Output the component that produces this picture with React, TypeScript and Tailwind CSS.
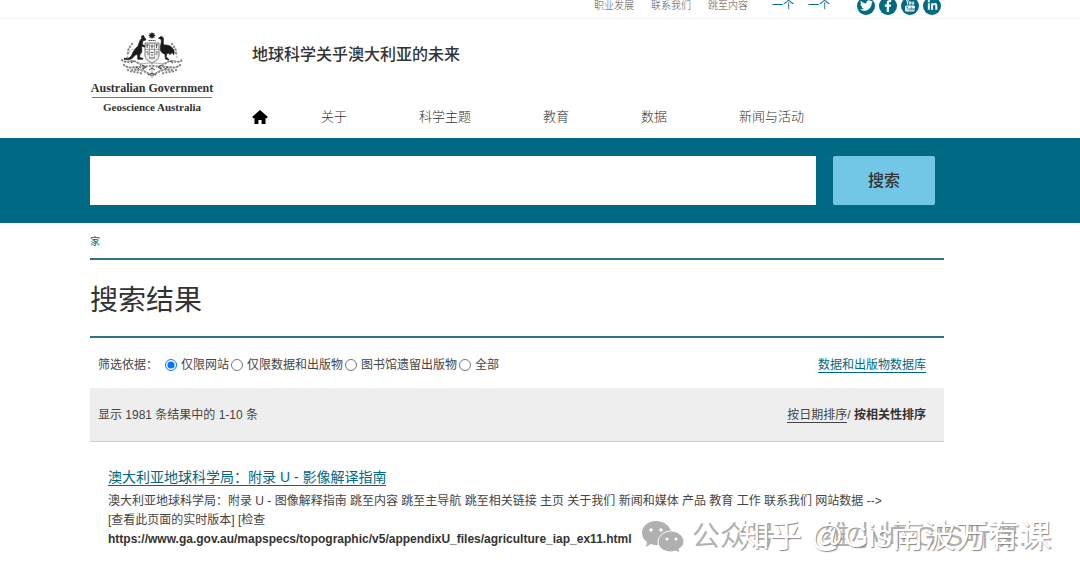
import { useState } from "react"
import { FaTwitter, FaFacebookF, FaLinkedinIn } from "react-icons/fa"

const YouTubeIcon = () => {
  return (
    <svg className="size-[14px]" viewBox="0 0 14 14" fill="none" stroke="#fff" aria-hidden="true">
      <path d="M3.500 1l1 2 1-2M4.500 3v2.500M6.200 2.800h1.600v2.400H6.200zM9.200 2.500v2.700h1.500V2.500" strokeWidth=".9" />
      <rect x="2" y="6.500" width="10" height="6" rx="1.500" fill="#fff" stroke="none" />
      <path d="M3.200 8h2M4.200 8v3.500M6 9v2.200h1.200V9M8.400 7.500v3.700h1V9.300h-1M12 11.200h-1.300V9.400h1v.9h-1" stroke="#006983" strokeWidth=".6" />
    </svg>
  )
}

const social = [
  { name: "Twitter", icon: <FaTwitter size={13} /> },
  { name: "Facebook", icon: <FaFacebookF size={12} /> },
  { name: "YouTube", icon: <YouTubeIcon /> },
  { name: "LinkedIn", icon: <FaLinkedinIn size={11} /> },
]

const menu = ["关于", "科学主题", "教育", "数据", "新闻与活动"]

const filters = ["仅限网站", "仅限数据和出版物", "图书馆遗留出版物", "全部"]

const Crest = () => {
  return (
    <svg className="h-[47px] w-[64px]" viewBox="0 0 64 47" fill="none" aria-hidden="true">
      {/* star and wreath */}
      <path d="M32 0l.9 1.500 1.800-.5-.5 1.700 1.600.8-1.600.8.5 1.700-1.800-.5L32 7l-.9-1.500-1.800.5.5-1.700-1.600-.8 1.600-.8-.5-1.700 1.800.5z" fill="#222" />
      <path d="M28.500 8.500h7" stroke="#444" strokeWidth="1.200" strokeDasharray="1.500 .5" />
      {/* shield */}
      <path d="M25 11h14v12c0 4-3 6-7 8-4-2-7-4-7-8z" fill="#eee" stroke="#666" strokeWidth=".9" />
      <path d="M25 17.500h14M29.500 11v16M34.500 11v16" stroke="#777" strokeWidth=".6" />
      <path d="M26 13h2.500M27.200 12v4M30.500 14h3M32 12.500v4M35.500 13h2.500M36.500 12v4M26.200 20h2.500M27 22h2M30.500 20.500h3M31 23h2M35.500 20h2.500M35.500 22h2M30 26h4" stroke="#555" strokeWidth=".9" />
      {/* wattle */}
      <g stroke="#888" strokeWidth=".7">
        <path d="M2 29c5 2 8-2 14 1s9 1 16 1 10 2 16-1 9 1 14-1M5 34c7 4 12-2 20 2M59 34c-7 4-12-2-20 2M14 39c6-3 12 0 18 5 6-5 12-8 18-5M32 31v15" />
        <path d="M8 22c-1-3 0-6 3-8M7 26c0-4 2-7 6-9M56 22c1-3 0-6-3-8M57 26c0-4-2-7-6-9" strokeDasharray="2 1" />
      </g>
      <g stroke="#888" strokeWidth="2.200" strokeLinecap="round" strokeDasharray=".2 3.100">
        <path d="M2 28c6 5 10-2 16 3s8 3 14 3 8 2 14-3 10 2 16-3" />
        <path d="M4 33c8 6 12-1 20 4M60 33c-8 6-12-1-20 4" />
        <path d="M12 38c6-2 13 1 20 6 7-5 14-8 20-6" />
        <path d="M8 21c0-4 2-6 4-9M56 21c0-4-2-6-4-9" />
        <path d="M8 38c4 3 10 1 14 4M56 38c-4 3-10 1-14 4" />
      </g>
      <path d="M22 33l4 2-3 2M42 33l-4 2 3 2M29 38l3-2 3 2M28 43l4-2 4 2M16 35l3 2M48 35l-3 2M11 31l3-2M53 31l-3-2" stroke="#444" strokeWidth="1" />
      {/* kangaroo and emu */}
      <g fill="#1b1b1b" stroke="#1b1b1b" strokeWidth=".7" strokeLinejoin="round">
        <path d="M23.500 3.500l1 2.200 1.400 1.300-.5 1.200-2.400.4-.8 3.600 2.800 1.800-.3 1-3.300-.7.4 3.400c.4 2-.5 3.500-1.800 4.500l-.4 3.300 3.200.8v1h-5l-.2-4.700c-2 .2-3.100.7-4.200 2.500-1.300 2.100-3.700 3-9.400 2.200l.2-1c4.800.2 6.400-.8 7.600-3.300 1.200-3.900 3.800-6.800 6.100-8.800l1.900-5.300 1.800-2.500.2-2.600z" />
        <path d="M38.500 6.200l1.600-1.300c1.800-.8 3.200.2 3.300 2.100.1 2.500-.7 4.500.7 6.100 3.400-.5 7.500.8 9.300 4.400.8 1.700.9 3.700.4 5.300l-1.800-2.300-1.700 2-2.100-1.500-1.400.7-.7 3.300 2.500 2v1l-3.200-1-.5-5.100c-3.300-.5-4.900-3.200-4.600-6.200.2-3.200 1.600-5.700.8-8.400z" />
      </g>
    </svg>
  )
}

const TopBar = () => {
  return (
    <div className="flex h-[19px] items-center overflow-hidden border-b border-[#f4f4f4] pb-[7px] pl-[594px] text-[10px] font-light whitespace-nowrap text-[#555]">
      <div className="flex gap-[17px]">
        <a href="#careers">职业发展</a>
        <a href="#contact">联系我们</a>
        <a href="#content">跳至内容</a>
      </div>
      <div className="ml-[24px] flex gap-[14px] text-[11px] font-normal text-[#006983]">
        <a href="#smaller">一个</a>
        <a href="#larger">一个</a>
      </div>
      <div className="ml-[27px] flex gap-[4px]">
        {social.map((item) => (
          <a
            key={item.name}
            href="#social"
            aria-label={item.name}
            className="flex size-[18px] items-center justify-center rounded-full bg-[#006983] text-white"
          >
            {item.icon}
          </a>
        ))}
      </div>
    </div>
  )
}

const Header = () => {
  return (
    <header className="flex h-[119px] pl-[92px]">
      <a href="#home" className="flex w-[120px] flex-col items-center pt-[13px] font-['Liberation_Serif',serif] font-bold whitespace-nowrap text-[#333]">
        <Crest />
        <span className="text-[12px] leading-[18px]">Australian Government</span>
        <span className="w-full border-t border-[#777] text-center text-[11px] leading-[19px]">Geoscience Australia</span>
      </a>
      <div className="ml-[40px] pt-[24px]">
        <p className="text-[16px] leading-[24px] font-medium text-[#333]">地球科学关乎澳大利亚的未来</p>
        <nav className="mt-[40px] flex items-center gap-[53px]">
          <a href="#home" aria-label="主页">
            <svg className="size-[16px]" viewBox="0 0 16 16" fill="#000">
              <path d="M8 1L.3 7.800l.7 1.400h1.500V15h3.900v-4h3.200v4h3.900V9.200H15l.7-1.400z" />
            </svg>
          </a>
          <ul className="flex gap-[72px] text-[13px] leading-[20px] font-light text-[#333]">
            {menu.map((item) => (
              <li key={item}>
                <a href="#menu">{item}</a>
              </li>
            ))}
          </ul>
        </nav>
      </div>
    </header>
  )
}

const SearchBar = () => {
  return (
    <form className="flex gap-[17px] bg-[#006983] pt-[18px] pr-[145px] pb-[18px] pl-[90px]" onSubmit={(e) => e.preventDefault()}>
      <input type="text" aria-label="搜索" className="h-[49px] min-w-0 flex-1 bg-white px-3 text-[16px] outline-none" />
      <button type="submit" className="h-[49px] w-[102px] rounded-[2px] bg-[#72c7e7] text-[16px] font-medium text-[#333]">
        搜索
      </button>
    </form>
  )
}

const Filters = () => {
  const [selected, setSelected] = useState(filters[0])
  return (
    <div className="flex items-center justify-between pt-[17px] pr-[18px] pb-[13px] pl-[8px] text-[12px] leading-[20px]">
      <fieldset className="flex items-center">
        <legend className="float-left mr-[7px]">筛选依据：</legend>
        <div className="flex gap-[2px]">
          {filters.map((item) => (
            <label key={item} className="flex items-center gap-[4px]">
              <input
                type="radio"
                name="filter"
                className="size-[12px]"
                checked={selected === item}
                onChange={() => setSelected(item)}
              />
              {item}
            </label>
          ))}
        </div>
      </fieldset>
      <a href="#database" className="border-b border-[#006983] leading-[14px] text-[#006983]">
        数据和出版物数据库
      </a>
    </div>
  )
}

const Watermark = () => {
  return (
    <div className="pointer-events-none absolute top-[514px] left-[642px] h-[46px] w-[424px] whitespace-nowrap">
      <svg className="absolute top-[7px] left-0 h-[32px] w-[42px]" viewBox="0 0 42 32">
        <path d="M14 0C6 0 0 5 0 12c0 4 2 7 5 9l-1 5 5-3c2 1 4 1 6 1 8 0 14-5 14-12S22 0 14 0z" fill="#b0b0b0" />
        <path d="M29 10c-7 0-13 5-13 11s6 10 13 10l5-1 4 2-1-4c3-2 5-4 5-7 0-6-6-11-13-11z" fill="#b0b0b0" stroke="#fff" />
        <g fill="#fff">
          <circle cx="9" cy="9" r="1.700" />
          <circle cx="19" cy="9" r="1.700" />
          <circle cx="25" cy="18" r="1.500" />
          <circle cx="34" cy="18" r="1.500" />
        </g>
      </svg>
      <div className="absolute top-[3px] left-[50px] flex gap-[30px] text-[28px] leading-[40px] text-[#b0b0b0]">
        <span>公众号 ·</span>
        <span>维小帅 GIS听课.</span>
      </div>
      <span className="absolute top-0 left-[96px] text-[32px] leading-[44px] text-white [text-shadow:1px_1px_1px_#888]">
        知乎 @Gis南波万有课
      </span>
    </div>
  )
}

const App = () => {
  return (
    <div className="relative min-h-screen overflow-hidden bg-white font-['Liberation_Sans','Noto_Sans_CJK_SC',sans-serif] text-[#444]">
      <TopBar />
      <Header />
      <SearchBar />
      <main className="pr-[136px] pl-[90px]">
        <div className="border-b-2 border-[#2f7188] pt-[9px] pb-[6px] text-[10px] leading-[20px] text-[#006983]">
          <a href="#home">家</a>
        </div>
        <h1 className="border-b-2 border-[#2f7188] pt-[21px] pb-[15px] text-[28px] leading-[40px] text-[#333]">搜索结果</h1>
        <Filters />
        <div className="flex items-center justify-between border-b border-[#ccc] bg-[#eee] pt-[17px] pr-[18px] pb-[16px] pl-[8px] text-[12px] leading-[20px]">
          <p>显示 1981 条结果中的 1-10 条</p>
          <p className="leading-[15px]">
            <a href="#date" className="border-b border-[#444]">按日期排序</a>/ <strong className="text-[#333]">按相关性排序</strong>
          </p>
        </div>
        <article className="px-[18px] pt-[26px] text-[12px] leading-[19px]">
          <h2 className="pb-[5px] text-[14px] leading-[19px] text-[#006983]">
            <a href="#result" className="border-b border-[#006983]">澳大利亚地球科学局：附录 U - 影像解译指南</a>
          </h2>
          <p>
            澳大利亚地球科学局：附录 U - 图像解释指南 跳至内容 跳至主导航 跳至相关链接 主页 关于我们 新闻和媒体 产品 教育 工作 联系我们 网站数据 --&gt;
            <br />
            [查看此页面的实时版本] [检查
          </p>
          <p className="font-bold text-[#333]">https://www.ga.gov.au/mapspecs/topographic/v5/appendixU_files/agriculture_iap_ex11.html</p>
        </article>
      </main>
      <Watermark />
    </div>
  )
}

export default App
